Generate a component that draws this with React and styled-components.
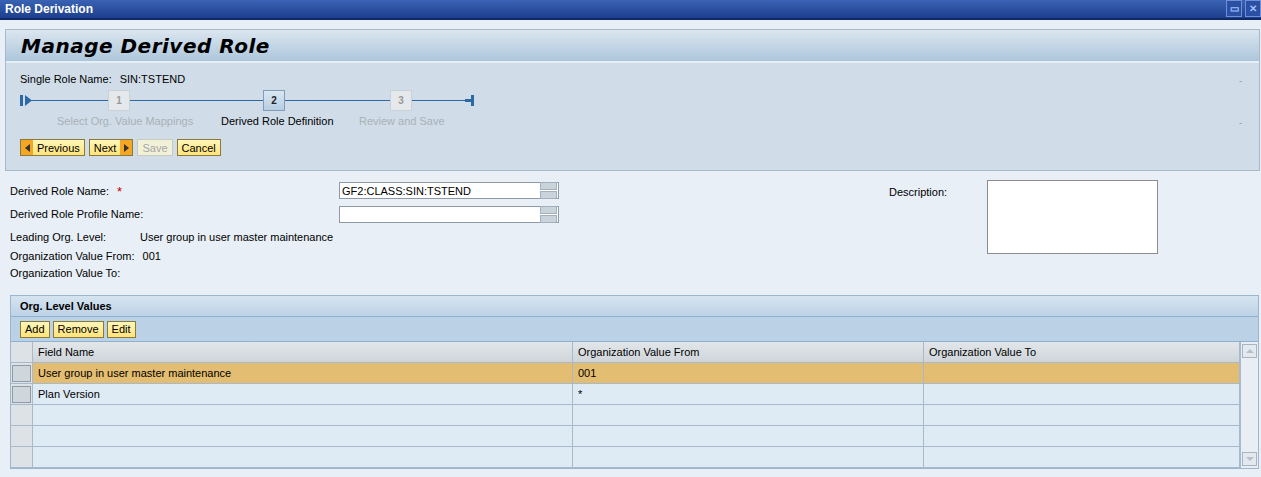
import React from "react";
import styled, { createGlobalStyle } from "styled-components";

const Global = createGlobalStyle`
  html, body { margin: 0; padding: 0; background: #e8eff6; }
  body { font-family: "Liberation Sans", Arial, sans-serif; font-size: 11px; color: #000; }
`;
const Page = styled.div`width: 1261px; height: 477px; overflow: hidden; display: flex; flex-direction: column;`;
const TitleBar = styled.div`
  height: 18px; flex: none; display: flex; align-items: center; justify-content: space-between;
  background: linear-gradient(#3a63b5, #1d3f8c); border-bottom: 2px solid #0e2a66; padding-left: 5px;
  color: #fff; font-weight: bold; font-size: 12px;
`;
const WinBtns = styled.div`display: flex; gap: 3px; align-self: flex-start;`;
const WinBtn = styled.div`
  width: 14px; height: 15px; border: 1px solid #6f8fd6; background: #2a4fa3; display: flex; align-items: center; justify-content: center;
  color: #9fc0ff; font-size: 10px;
`;
const Body = styled.div`padding: 9px 1px 0 5px; display: flex; flex-direction: column;`;
const HeaderPanel = styled.div`border: 1px solid #a7b8c8; display: flex; flex-direction: column;`;
const TitleStrip = styled.div`
  height: 31px; background: linear-gradient(#dbe6ef, #adc6dc); border-bottom: 2px solid #e6eef5;
  display: flex; align-items: center; padding-left: 15px;
  font: italic bold 20px "DejaVu Sans", Verdana, sans-serif; letter-spacing: 0.5px;
`;
const HeaderBody = styled.div`box-sizing: border-box; background: #d0dde8; height: 107px; padding: 10px 15px 0 14px; display: flex; flex-direction: column; position: relative;`;
const Dash = styled.span`position: absolute; right: 17px; top: ${p => p.top}px; color: #8094aa; font-size: 9px;`;
const InfoLine = styled.div`display: flex; gap: 8px;`;
const Roadmap = styled.div`position: relative; height: 46px; width: 455px; margin-top: 5px;`;
const RoadLine = styled.div`position: absolute; left: 10px; right: 8px; top: 10px; height: 1px; background: #2d6aa3;`;
const StepBox = styled.div`
  position: absolute; left: ${p => p.x}px; top: 0; width: 22px; height: 21px; box-sizing: border-box;
  border: 1px solid ${p => p.active ? "#7f9cbb" : "#c9d1d8"}; background: ${p => p.active ? "linear-gradient(#dbe7f2,#b7cde2)" : "#e5e9ec"};
  color: ${p => p.active ? "#222" : "#999"}; font-weight: bold; font-size: 10px; display: flex; align-items: center; justify-content: center;
`;
const StepLabel = styled.div`position: absolute; left: ${p => p.x}px; top: 25px; color: ${p => p.active ? "#000" : "#a9b0b6"}; white-space: nowrap;`;
const Buttons = styled.div`display: flex; gap: 4px; margin-top: 3px;`;
const Btn = styled.button`
  height: 17px; padding: 0 4px; border: 1px solid ${p => p.disabled ? "#c6ccbf" : "#8a7a3a"};
  background: ${p => p.disabled ? "#f3f0d8" : "linear-gradient(#fff6b8,#ffe37a)"};
  color: ${p => p.disabled ? "#a6a6a6" : "#000"}; font: 11px "Liberation Sans", Arial, sans-serif; display: flex; align-items: center; gap: 4px; cursor: default;
`;
const Arrow = styled.span`
  width: 12px; height: 15px; background: #f5a623; display: flex; align-items: center; justify-content: center;
  margin: ${p => p.left ? "0 0 0 -4px" : "0 -4px 0 0"};
  &::after { content: ""; border-top: 4px solid transparent; border-bottom: 4px solid transparent;
    ${p => p.left ? "border-right: 5px solid #333;" : "border-left: 5px solid #333;"} }
`;
const Form = styled.div`display: grid; grid-template-columns: 329px 550px 98px 172px; padding: 10px 0 0 5px; height: 124px; box-sizing: border-box;`;
const FormLeft = styled.div`display: flex; flex-direction: column;`;
const FormRow = styled.div`height: ${p => p.h || 17}px; display: flex; align-items: center; gap: 8px;`;
const Req = styled.span`color: #c00; font-size: 13px;`;
const Inputs = styled.div`display: flex; flex-direction: column; gap: 7px; padding-top: 1px;`;
const Input = styled.div`
  width: 220px; height: 17px; box-sizing: border-box; border: 1px solid #8e9aa5; background: #fff; display: flex; align-items: center; justify-content: space-between; padding-left: 2px;
`;
const Spin = styled.div`display: flex; flex-direction: column; gap: 1px; padding: 1px 1px 1px 0;`;
const SpinBtn = styled.div`width: 15px; height: 6px; background: #c8d3dc; border: 1px solid #a3b0bc;`;
const DescLabel = styled.div`padding-top: 5px;`;
const TextArea = styled.div`width: 171px; height: 74px; box-sizing: border-box; border: 1px solid #8c8c8c; background: #fff; margin-top: -1px;`;
const TablePanel = styled.div`margin: 0 2px 0 10px; border: 1px solid #9cb6cf; display: flex; flex-direction: column;`;
const TPHeader = styled.div`height: 20px; background: linear-gradient(#d6e4f0, #bcd2e6); border-bottom: 1px solid #8fb0cf; padding-left: 9px; display: flex; align-items: center; font-weight: bold;`;
const TPToolbar = styled.div`height: 24px; background: #bad1e6; border-bottom: 1px solid #8fb0cf; padding-left: 9px; display: flex; align-items: center; gap: 3px;`;
const TableWrap = styled.div`display: flex;`;
const Grid = styled.div`flex: 1; display: grid; grid-template-columns: 22px 540px 351px 1fr;`;
const Cell = styled.div`
  height: 20px; border-right: 1px solid #a7b9ca; border-bottom: 1px solid #a7b9ca; padding-left: 5px; display: flex; align-items: center;
  background: ${p => p.bg};
`;
const Sel = styled.div`height: 20px; border-right: 1px solid #a7b9ca; border-bottom: 1px solid #a7b9ca; background: #dce2e6; display: flex; align-items: center; justify-content: center;`;
const SelBtn = styled.div`width: 19px; height: 17px; box-sizing: border-box; border: 1px solid #8e9aa5; background: #cfd6dc;`;
const Scroll = styled.div`width: 17px; background: #e8eef3; border-left: 1px solid #a7b9ca; display: flex; flex-direction: column; justify-content: space-between; padding: 2px 0;`;
const ScrollBtn = styled.div`
  width: 13px; height: 12px; margin-left: 1px; border: 1px solid #a7b5c1; background: #e3e9ee; display: flex; align-items: center; justify-content: center;
  &::after { content: ""; border-left: 4px solid transparent; border-right: 4px solid transparent;
    ${p => p.up ? "border-bottom: 4px solid #b5c0c9;" : "border-top: 4px solid #b5c0c9;"} }
`;

const rows = [
  ["User group in user master maintenance", "001", "", true],
  ["Plan Version", "*", "", false, true],
  ["", "", ""], ["", "", ""], ["", "", ""],
];

export default function App() {
  return (
    <Page>
      <Global />
      <TitleBar>Role Derivation<WinBtns><WinBtn>▭</WinBtn><WinBtn>✕</WinBtn></WinBtns></TitleBar>
      <Body>
        <HeaderPanel>
          <TitleStrip>Manage Derived Role</TitleStrip>
          <HeaderBody>
            <Dash top={13}>-</Dash><Dash top={55}>-</Dash>
            <InfoLine><span>Single Role Name:</span><span>SIN:TSTEND</span></InfoLine>
            <Roadmap>
              <RoadLine />
              <svg style={{ position: "absolute", left: 0, top: 5 }} width="14" height="12"><rect x="0" y="0" width="3" height="11" fill="#2d6aa3" /><path d="M5 0 L12 5.5 L5 11 Z" fill="#2d6aa3" /></svg>
              <svg style={{ position: "absolute", right: 0, top: 5 }} width="10" height="12"><rect x="0" y="4" width="6" height="3" fill="#2d6aa3" /><rect x="6" y="0" width="3" height="11" fill="#2d6aa3" /></svg>
              <StepBox x={88}>1</StepBox>
              <StepBox x={243} active>2</StepBox>
              <StepBox x={370}>3</StepBox>
              <StepLabel x={37}>Select Org. Value Mappings</StepLabel>
              <StepLabel x={201} active>Derived Role Definition</StepLabel>
              <StepLabel x={339}>Review and Save</StepLabel>
            </Roadmap>
            <Buttons>
              <Btn><Arrow left />Previous</Btn>
              <Btn>Next<Arrow /></Btn>
              <Btn disabled>Save</Btn>
              <Btn>Cancel</Btn>
            </Buttons>
          </HeaderBody>
        </HeaderPanel>
        <Form>
          <FormLeft>
            <FormRow h={20}>Derived Role Name: <Req>*</Req></FormRow>
            <FormRow h={25}>Derived Role Profile Name:</FormRow>
            <FormRow h={21}><span style={{ width: 122 }}>Leading Org. Level:</span>User group in user master maintenance</FormRow>
            <FormRow h={17}><span>Organization Value From:</span>001</FormRow>
            <FormRow h={18}>Organization Value To:</FormRow>
          </FormLeft>
          <Inputs>
            <Input>GF2:CLASS:SIN:TSTEND<Spin><SpinBtn /><SpinBtn /></Spin></Input>
            <Input><span /><Spin><SpinBtn /><SpinBtn /></Spin></Input>
          </Inputs>
          <DescLabel>Description:</DescLabel>
          <TextArea />
        </Form>
      </Body>
      <TablePanel>
        <TPHeader>Org. Level Values</TPHeader>
        <TPToolbar><Btn>Add</Btn><Btn>Remove</Btn><Btn>Edit</Btn></TPToolbar>
        <TableWrap>
          <Grid>
            <Sel />
            <Cell bg="linear-gradient(#e2e6e9,#ced5da)">Field Name</Cell>
            <Cell bg="linear-gradient(#e2e6e9,#ced5da)">Organization Value From</Cell>
            <Cell bg="linear-gradient(#e2e6e9,#ced5da)">Organization Value To</Cell>
            {rows.map((r, i) => (
              <React.Fragment key={i}>
                <Sel>{(r[3] || r[4]) && <SelBtn />}</Sel>
                {[0, 1, 2].map(c => <Cell key={c} bg={r[3] ? "#e3bd72" : "#deeaf4"}>{r[c]}</Cell>)}
              </React.Fragment>
            ))}
          </Grid>
          <Scroll><ScrollBtn up /><ScrollBtn /></Scroll>
        </TableWrap>
      </TablePanel>
    </Page>
  );
}
